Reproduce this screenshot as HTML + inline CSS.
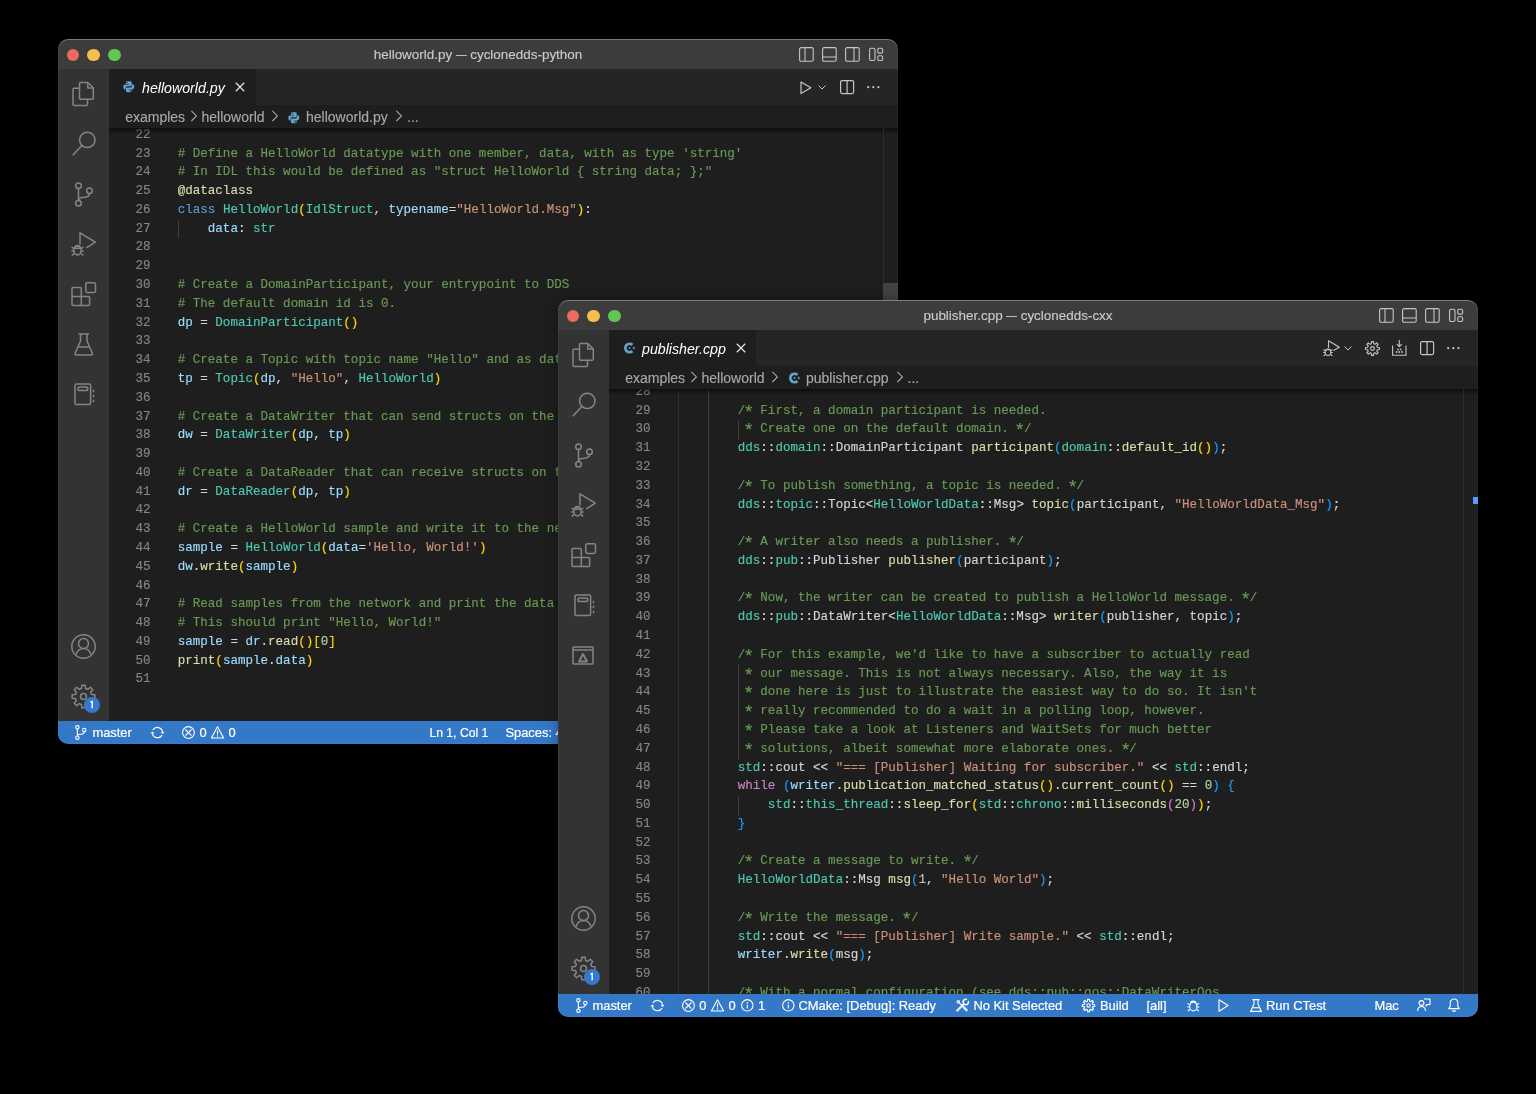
<!DOCTYPE html><html><head><meta charset="utf-8"><style>
*{box-sizing:border-box;margin:0;padding:0}
html,body{width:1536px;height:1094px;background:#000;overflow:hidden;position:relative}
body{font-family:"Liberation Sans",sans-serif}
.win{position:absolute;border-radius:10px;overflow:hidden;background:#1e1e1e;will-change:transform;box-shadow:0 0 14px rgba(0,0,0,.35)}
.frame{position:absolute;inset:0;border-radius:10px;box-shadow:inset 0 1px 0 rgba(255,255,255,.3), inset 0 0 0 1px rgba(255,255,255,.035);pointer-events:none}
.tb{position:absolute;left:0;top:0;right:0;height:30px;background:#3c3c3c}
.tl{position:absolute;top:9.8px;width:12.6px;height:12.6px;border-radius:50%}
.tl.r{background:#ed6a5e}.tl.y{background:#f4bf4f}.tl.g{background:#61c554}
.title{position:absolute;left:0;right:0;top:7.8px;-webkit-text-stroke:0.12px #ccc;text-align:center;color:#cccccc;font-size:13.45px;line-height:16px}
.dash{font-size:10.6px;position:relative;top:-0.6px}
.ic{position:absolute;overflow:visible}
.ab{position:absolute;left:0;top:30px;width:51px;bottom:23.3px;background:#333333}
.tabs{position:absolute;left:51px;right:0;top:30px;height:36px;background:#252526}
.tab{position:absolute;left:51px;top:30px;height:36px;background:#1e1e1e}
.tabname{position:absolute;left:84px;top:40.6px;font-size:14.2px;line-height:16px;font-style:italic;color:#ffffff}
.tabx{position:absolute;top:43px;width:10px;height:10px;line-height:0}
.crumbs{position:absolute;left:51px;right:0;top:66px;height:23px;background:#1e1e1e}
.crumb{position:absolute;top:70px;-webkit-text-stroke:0.12px currentColor;font-size:14px;line-height:16px;color:#a9a9a9;white-space:pre}
.ed{position:absolute;left:51px;right:0;top:89px;bottom:23.3px;overflow:hidden;background:#1e1e1e}
.shadow{position:absolute;left:51px;right:0;top:89px;height:6px;background:linear-gradient(rgba(0,0,0,.55),rgba(0,0,0,0))}
.ln{position:absolute;left:0;text-align:right;-webkit-text-stroke:0.15px currentColor;height:18.78px;line-height:18.78px;font-family:"Liberation Mono",monospace;font-size:12.56px;color:#858585}
.cl{position:absolute;white-space:pre;-webkit-text-stroke:0.15px currentColor;height:18.78px;line-height:18.78px;font-family:"Liberation Mono",monospace;font-size:12.56px;color:#d4d4d4}
.guide{position:absolute;width:1px;background:#404040}
.ast{display:inline-block;width:7.535px;font-style:normal;transform:translateY(2.6px) scale(1.45);-webkit-text-stroke:0.1px currentColor}
.c{color:#6a9955}.k{color:#569cd6}.kc{color:#c586c0}.t{color:#4ec9b0}.f{color:#dcdcaa}.v{color:#9cdcfe}.s{color:#ce9178}.n{color:#b5cea8}
.b1{color:#ffd700}.b2{color:#da70d6}.b3{color:#179fff}
.sbar{position:absolute;right:0;top:89px;bottom:23.3px;width:15.5px;border-left:1px solid #2a2a2a}
.st{position:absolute;left:0;right:0;bottom:0;height:23.3px;background:#3479c8}
.sti{position:absolute;top:0;-webkit-text-stroke:0.2px #fff;height:23.3px;line-height:23.3px;font-size:12.9px;color:#ffffff;white-space:pre}
.badge{position:absolute;width:16px;height:16px;border-radius:50%;background:#3478cf;color:#fff;font-size:10.5px;font-weight:bold;line-height:16px;text-align:center}
</style></head><body><div class="win" style="left:58px;top:39px;width:840px;height:705.2px;z-index:1">
<div class="tb"></div>
<div class="tl r" style="left:8.7px"></div><div class="tl y" style="left:29.4px"></div><div class="tl g" style="left:50.1px"></div>
<div class="title">helloworld.py <span class="dash">—</span> cyclonedds-python</div>
<svg class="ic" style="left:740.8px;top:8.3px" width="15" height="15" viewBox="0 0 15 15" ><g fill="none" stroke="#c5c5c5" stroke-width="1.1"><rect x="0.6" y="0.6" width="13.6" height="13.6" rx="1.5"/><path d="M6 0.6 V14.2"/></g></svg>
<svg class="ic" style="left:764.1px;top:8.3px" width="15" height="15" viewBox="0 0 15 15" ><g fill="none" stroke="#c5c5c5" stroke-width="1.1"><rect x="0.6" y="0.6" width="13.6" height="13.6" rx="1.5"/><path d="M0.6 10 H14.2"/></g></svg>
<svg class="ic" style="left:787.1px;top:8.3px" width="15" height="15" viewBox="0 0 15 15" ><g fill="none" stroke="#c5c5c5" stroke-width="1.1"><rect x="0.6" y="0.6" width="13.6" height="13.6" rx="1.5"/><path d="M9 0.6 V14.2"/></g></svg>
<svg class="ic" style="left:810.8px;top:8.3px" width="15" height="15" viewBox="0 0 15 15" ><g fill="none" stroke="#c5c5c5" stroke-width="1.1"><rect x="0.6" y="1.3" width="5.4" height="12.2" rx="1.5"/><rect x="8.8" y="1.3" width="4.8" height="4.8" rx="1.2"/><rect x="8.8" y="8.7" width="4.8" height="4.8" rx="1.2"/></g></svg>
<div class="ab"></div>
<svg class="ic" style="left:13.7px;top:42.0px" width="24" height="26" viewBox="0 0 24 26" ><g fill="none" stroke="#858585" stroke-width="1.5" stroke-linejoin="round"><path d="M7.5 7.3 H2.2 a1.2 1.2 0 0 0 -1.2 1.2 V23.3 a1.2 1.2 0 0 0 1.2 1.2 H14.3 a1.2 1.2 0 0 0 1.2 -1.2 V18.2"/><path d="M8.7 1.5 H15.8 L21.3 7 V17 a1.2 1.2 0 0 1 -1.2 1.2 H8.7 a1.2 1.2 0 0 1 -1.2 -1.2 V2.7 a1.2 1.2 0 0 1 1.2 -1.2 Z"/><path d="M15.8 1.5 V7 H21.3"/></g></svg>
<svg class="ic" style="left:14.0px;top:92.3px" width="25" height="26" viewBox="0 0 25 26" ><g fill="none" stroke="#858585" stroke-width="1.5"><circle cx="15.3" cy="8.9" r="7.7"/><path d="M9.8 14.4 L0.8 24.2"/></g></svg>
<svg class="ic" style="left:15.5px;top:142.5px" width="20" height="25" viewBox="0 0 20 25" ><g fill="none" stroke="#858585" stroke-width="1.5"><circle cx="4.5" cy="3.8" r="2.8"/><circle cx="4.5" cy="21.2" r="2.8"/><circle cx="15.5" cy="8.8" r="2.8"/><path d="M4.5 6.6 V18.4"/><path d="M15.5 11.6 C15.5 15 12 15.5 8.5 15.5 C6 15.5 4.5 17 4.5 18.4"/></g></svg>
<svg class="ic" style="left:12.899999999999999px;top:192.5px" width="26" height="26" viewBox="0 0 26 26" ><g fill="none" stroke="#858585" stroke-width="1.5" stroke-linejoin="round"><path d="M9 12.5 V0.8 L24.3 10.2 L15.3 15.8"/><ellipse cx="6.5" cy="18.6" rx="3.6" ry="4.3"/><path d="M3.6 15.2 C4.5 13 8.5 13 9.4 15.2"/><path d="M2.9 16.5 L0.6 15.2 M10.1 16.5 L12.4 15.2 M2.9 19 H0.3 M10.1 19 H12.7 M3.1 21.5 L0.8 23.3 M9.9 21.5 L12.2 23.3 M3 16.3 H10"/></g></svg>
<svg class="ic" style="left:12.899999999999999px;top:242.5px" width="26" height="26" viewBox="0 0 26 26" ><g fill="none" stroke="#858585" stroke-width="1.5" stroke-linejoin="round"><path d="M2 5.6 H9.3 a1 1 0 0 1 1 1 V14.6 H17.6 a1 1 0 0 1 1 1 V22.5 a1 1 0 0 1 -1 1 H2 a1 1 0 0 1 -1 -1 V6.6 a1 1 0 0 1 1 -1 Z"/><path d="M1 14.6 H10.3 V23.5"/><rect x="14.8" y="0.7" width="9.7" height="9.7" rx="1.4"/></g></svg>
<svg class="ic" style="left:15.899999999999999px;top:294.2px" width="20" height="23" viewBox="0 0 20 23" ><g fill="none" stroke="#858585" stroke-width="1.5" stroke-linejoin="round"><path d="M4.5 1 H15"/><path d="M6.5 1 V8 L1 20.5 a1 1 0 0 0 0.9 1.4 H17.6 a1 1 0 0 0 0.9 -1.4 L13 8 V1"/><path d="M3.8 14 H15.7"/></g></svg>
<svg class="ic" style="left:15.7px;top:344.3px" width="22" height="23" viewBox="0 0 22 23" ><g fill="none" stroke="#858585" stroke-width="1.5" stroke-linejoin="round"><rect x="1" y="1" width="15.6" height="20.6" rx="1.5"/><rect x="3.9" y="4" width="9.9" height="3.6" rx="1.8"/><path d="M19.5 6.8 V9.3 M19.5 11.8 V14.3 M19.5 16.8 V19.3"/></g></svg>
<svg class="ic" style="left:12.899999999999999px;top:594.7px" width="25" height="25" viewBox="0 0 25 25" ><g fill="none" stroke="#858585" stroke-width="1.5"><circle cx="12.5" cy="12.5" r="11.7"/><circle cx="12.5" cy="9.5" r="5"/><path d="M5 20.5 C6.5 16.5 9 14.6 12.5 14.6 C16 14.6 18.5 16.5 20 20.5"/></g></svg>
<svg class="ic" style="left:12.899999999999999px;top:644.8px" width="25" height="25" viewBox="0 0 25 25" ><g fill="none" stroke="#858585" stroke-width="1.5" stroke-linejoin="round"><path d="M20.56 10.50 L23.87 10.79 L23.87 14.21 L20.56 14.50 L19.61 16.78 L21.75 19.33 L19.33 21.75 L16.78 19.61 L14.50 20.56 L14.21 23.87 L10.79 23.87 L10.50 20.56 L8.22 19.61 L5.67 21.75 L3.25 19.33 L5.39 16.78 L4.44 14.50 L1.13 14.21 L1.13 10.79 L4.44 10.50 L5.39 8.22 L3.25 5.67 L5.67 3.25 L8.22 5.39 L10.50 4.44 L10.79 1.13 L14.21 1.13 L14.50 4.44 L16.78 5.39 L19.33 3.25 L21.75 5.67 L19.61 8.22 Z"/><circle cx="12.5" cy="12.5" r="3"/></g></svg><div class="badge" style="left:25.799999999999997px;top:657.5px"><svg width="16" height="16" viewBox="0 0 16 16" style="position:absolute;left:0;top:0"><path d="M6.5 5.3 L8.2 4.3 V11.2" fill="none" stroke="#fff" stroke-width="1.45" stroke-linejoin="round"/></svg></div>
<div class="tabs"></div>
<div class="tab" style="width:146.5px"></div>
<svg class="ic" style="left:65.2px;top:41.900000000000006px" width="11.6" height="11.6" viewBox="0 0 12 12"><g fill="#62a2cc" fill-rule="evenodd"><path d="M4.5 0.3 H7.6 Q9 0.3 9 1.7 V4.3 Q9 5.4 7.9 5.4 H4.4 Q2.6 5.4 2.6 7.2 V8.7 H1.6 Q0.3 8.7 0.3 6 Q0.3 3.5 1.8 3.5 H6.3 V3.1 H3 V1.8 Q3 0.3 4.5 0.3 Z M4.4 1.2 a0.62 0.62 0 1 0 0.01 0 Z"/><path d="M4.5 0.3 H7.6 Q9 0.3 9 1.7 V4.3 Q9 5.4 7.9 5.4 H4.4 Q2.6 5.4 2.6 7.2 V8.7 H1.6 Q0.3 8.7 0.3 6 Q0.3 3.5 1.8 3.5 H6.3 V3.1 H3 V1.8 Q3 0.3 4.5 0.3 Z M4.4 1.2 a0.62 0.62 0 1 0 0.01 0 Z" transform="rotate(180 6 6)"/></g></svg>
<div class="tabname">helloworld.py</div>
<div class="tabx" style="left:177.25px"><svg width="10" height="10" viewBox="0 0 10 10"><path d="M0.8 0.8 L9.2 9.2 M9.2 0.8 L0.8 9.2" stroke="#e0e0e0" stroke-width="1.3" fill="none"/></svg></div>
<svg class="ic" style="left:741.5px;top:41.8px" width="13" height="14" viewBox="0 0 13 14" ><path d="M1 1 L10.9 6.8 L1 12.6 Z" fill="none" stroke="#c5c5c5" stroke-width="1.2" stroke-linejoin="round"/></svg>
<svg class="ic" style="left:760.3px;top:46px" width="8" height="5" viewBox="0 0 8 5" ><path d="M0.5 0.5 L4 4 L7.5 0.5" fill="none" stroke="#c5c5c5" stroke-width="1"/></svg>
<svg class="ic" style="left:781.6px;top:41px" width="14.5" height="14.5" viewBox="0 0 14.5 14.5" ><g fill="none" stroke="#c5c5c5" stroke-width="1.2"><rect x="0.6" y="0.6" width="13" height="13" rx="1.5"/><path d="M7.1 0.6 V13.6"/></g></svg>
<svg class="ic" style="left:809px;top:46.5px" width="13" height="3" viewBox="0 0 13 3" ><g fill="#c5c5c5"><circle cx="1.2" cy="1.2" r="1.1"/><circle cx="6.3" cy="1.2" r="1.1"/><circle cx="11.4" cy="1.2" r="1.1"/></g></svg>
<div class="crumbs"></div>
<div class="crumb" style="left:67.2px">examples</div>
<svg class="ic" style="left:132.5px;top:72.4px" width="6" height="10" viewBox="0 0 6 10" ><path d="M0.4 -0.2 L5.4 4.9 L0.4 10" fill="none" stroke="#a9a9a9" stroke-width="1.1"/></svg>
<div class="crumb" style="left:143.5px">helloworld</div>
<svg class="ic" style="left:213.5px;top:72.4px" width="6" height="10" viewBox="0 0 6 10" ><path d="M0.4 -0.2 L5.4 4.9 L0.4 10" fill="none" stroke="#a9a9a9" stroke-width="1.1"/></svg>
<svg class="ic" style="left:229.7px;top:72.5px" width="11.6" height="11.6" viewBox="0 0 12 12"><g fill="#62a2cc" fill-rule="evenodd"><path d="M4.5 0.3 H7.6 Q9 0.3 9 1.7 V4.3 Q9 5.4 7.9 5.4 H4.4 Q2.6 5.4 2.6 7.2 V8.7 H1.6 Q0.3 8.7 0.3 6 Q0.3 3.5 1.8 3.5 H6.3 V3.1 H3 V1.8 Q3 0.3 4.5 0.3 Z M4.4 1.2 a0.62 0.62 0 1 0 0.01 0 Z"/><path d="M4.5 0.3 H7.6 Q9 0.3 9 1.7 V4.3 Q9 5.4 7.9 5.4 H4.4 Q2.6 5.4 2.6 7.2 V8.7 H1.6 Q0.3 8.7 0.3 6 Q0.3 3.5 1.8 3.5 H6.3 V3.1 H3 V1.8 Q3 0.3 4.5 0.3 Z M4.4 1.2 a0.62 0.62 0 1 0 0.01 0 Z" transform="rotate(180 6 6)"/></g></svg>
<div class="crumb" style="left:248px">helloworld.py</div>
<svg class="ic" style="left:338px;top:72.4px" width="6" height="10" viewBox="0 0 6 10" ><path d="M0.4 -0.2 L5.4 4.9 L0.4 10" fill="none" stroke="#a9a9a9" stroke-width="1.1"/></svg>
<div class="crumb" style="left:349px">...</div>
<div class="ed">
<div class="guide" style="left:68.7px;top:91.71px;height:18.78px;background:#404040"></div>
<div class="ln" style="top:-2.19px;width:41.5px">22</div>
<div class="ln" style="top:16.59px;width:41.5px">23</div>
<div class="cl" style="top:16.59px;left:68.70px"><span class="c"># Define a HelloWorld datatype with one member, data, with as type 'string'</span></div>
<div class="ln" style="top:35.37px;width:41.5px">24</div>
<div class="cl" style="top:35.37px;left:68.70px"><span class="c"># In IDL this would be defined as "struct HelloWorld { string data; };"</span></div>
<div class="ln" style="top:54.15px;width:41.5px">25</div>
<div class="cl" style="top:54.15px;left:68.70px"><span class="f">@dataclass</span></div>
<div class="ln" style="top:72.93px;width:41.5px">26</div>
<div class="cl" style="top:72.93px;left:68.70px"><span class="k">class</span> <span class="t">HelloWorld</span><span class="b1">(</span><span class="t">IdlStruct</span>, <span class="v">typename</span>=<span class="s">"HelloWorld.Msg"</span><span class="b1">)</span>:</div>
<div class="ln" style="top:91.71px;width:41.5px">27</div>
<div class="cl" style="top:91.71px;left:68.70px">    <span class="v">data</span>: <span class="t">str</span></div>
<div class="ln" style="top:110.49px;width:41.5px">28</div>
<div class="ln" style="top:129.27px;width:41.5px">29</div>
<div class="ln" style="top:148.05px;width:41.5px">30</div>
<div class="cl" style="top:148.05px;left:68.70px"><span class="c"># Create a DomainParticipant, your entrypoint to DDS</span></div>
<div class="ln" style="top:166.83px;width:41.5px">31</div>
<div class="cl" style="top:166.83px;left:68.70px"><span class="c"># The default domain id is 0.</span></div>
<div class="ln" style="top:185.61px;width:41.5px">32</div>
<div class="cl" style="top:185.61px;left:68.70px"><span class="v">dp</span> = <span class="t">DomainParticipant</span><span class="b1">()</span></div>
<div class="ln" style="top:204.39px;width:41.5px">33</div>
<div class="ln" style="top:223.17px;width:41.5px">34</div>
<div class="cl" style="top:223.17px;left:68.70px"><span class="c"># Create a Topic with topic name "Hello" and as datatype "HelloWorld"</span></div>
<div class="ln" style="top:241.95px;width:41.5px">35</div>
<div class="cl" style="top:241.95px;left:68.70px"><span class="v">tp</span> = <span class="t">Topic</span><span class="b1">(</span><span class="v">dp</span>, <span class="s">"Hello"</span>, <span class="t">HelloWorld</span><span class="b1">)</span></div>
<div class="ln" style="top:260.73px;width:41.5px">36</div>
<div class="ln" style="top:279.51px;width:41.5px">37</div>
<div class="cl" style="top:279.51px;left:68.70px"><span class="c"># Create a DataWriter that can send structs on the "Hello" topic</span></div>
<div class="ln" style="top:298.29px;width:41.5px">38</div>
<div class="cl" style="top:298.29px;left:68.70px"><span class="v">dw</span> = <span class="t">DataWriter</span><span class="b1">(</span><span class="v">dp</span>, <span class="v">tp</span><span class="b1">)</span></div>
<div class="ln" style="top:317.07px;width:41.5px">39</div>
<div class="ln" style="top:335.85px;width:41.5px">40</div>
<div class="cl" style="top:335.85px;left:68.70px"><span class="c"># Create a DataReader that can receive structs on the "Hello" topic</span></div>
<div class="ln" style="top:354.63px;width:41.5px">41</div>
<div class="cl" style="top:354.63px;left:68.70px"><span class="v">dr</span> = <span class="t">DataReader</span><span class="b1">(</span><span class="v">dp</span>, <span class="v">tp</span><span class="b1">)</span></div>
<div class="ln" style="top:373.41px;width:41.5px">42</div>
<div class="ln" style="top:392.19px;width:41.5px">43</div>
<div class="cl" style="top:392.19px;left:68.70px"><span class="c"># Create a HelloWorld sample and write it to the network</span></div>
<div class="ln" style="top:410.97px;width:41.5px">44</div>
<div class="cl" style="top:410.97px;left:68.70px"><span class="v">sample</span> = <span class="t">HelloWorld</span><span class="b1">(</span><span class="v">data</span>=<span class="s">'Hello, World!'</span><span class="b1">)</span></div>
<div class="ln" style="top:429.75px;width:41.5px">45</div>
<div class="cl" style="top:429.75px;left:68.70px"><span class="v">dw</span>.<span class="f">write</span><span class="b1">(</span><span class="v">sample</span><span class="b1">)</span></div>
<div class="ln" style="top:448.53px;width:41.5px">46</div>
<div class="ln" style="top:467.31px;width:41.5px">47</div>
<div class="cl" style="top:467.31px;left:68.70px"><span class="c"># Read samples from the network and print the data in the first one</span></div>
<div class="ln" style="top:486.09px;width:41.5px">48</div>
<div class="cl" style="top:486.09px;left:68.70px"><span class="c"># This should print "Hello, World!"</span></div>
<div class="ln" style="top:504.87px;width:41.5px">49</div>
<div class="cl" style="top:504.87px;left:68.70px"><span class="v">sample</span> = <span class="v">dr</span>.<span class="f">read</span><span class="b1">()</span><span class="b1">[</span><span class="n">0</span><span class="b1">]</span></div>
<div class="ln" style="top:523.65px;width:41.5px">50</div>
<div class="cl" style="top:523.65px;left:68.70px"><span class="f">print</span><span class="b1">(</span><span class="v">sample</span>.<span class="v">data</span><span class="b1">)</span></div>
<div class="ln" style="top:542.43px;width:41.5px">51</div>
</div>
<div class="shadow"></div>
<div class="sbar"></div>
<div style="position:absolute;right:0;top:244px;width:15px;height:200px;background:#434343"></div>
<div class="st"></div>
<svg class="ic" style="left:17.1px;top:685.9000000000001px" width="12" height="15" viewBox="0 0 12 15" ><g fill="none" stroke="#ffffff" stroke-width="1.1"><circle cx="2.4" cy="2.3" r="1.7"/><circle cx="2.4" cy="12.7" r="1.7"/><circle cx="9.3" cy="5" r="1.7"/><path d="M2.4 4 V11 M9.3 6.7 C9.3 9 7.5 9.3 5 9.3 C3.5 9.3 2.4 10 2.4 11"/></g></svg>
<div class="sti" style="top:681.7px;left:34.4px;">master</div>
<svg class="ic" style="left:91.5px;top:685.9000000000001px" width="15" height="15" viewBox="0 0 15 15" ><g fill="none" stroke="#ffffff" stroke-width="1.15"><path d="M2.91 4.85 A5.3 5.3 0 0 1 12.6 7.2"/><path d="M12.09 10.15 A5.3 5.3 0 0 1 2.36 8.6"/></g><g fill="#ffffff"><path d="M10.5 6.9 L14.6 6.9 L12.6 9.0 Z"/><path d="M0.4 8.6 L4.5 8.6 L2.4 6.5 Z"/></g></svg>
<svg class="ic" style="left:123.6px;top:686.9000000000001px" width="13" height="13" viewBox="0 0 13 13" ><g fill="none" stroke="#ffffff" stroke-width="1.1"><circle cx="6.45" cy="6.55" r="5.9"/><path d="M3.4 3.5 L9.5 9.6 M9.5 3.5 L3.4 9.6"/></g></svg>
<div class="sti" style="top:681.7px;left:141.5px;">0</div>
<svg class="ic" style="left:153px;top:686.9000000000001px" width="13" height="13" viewBox="0 0 13 13" ><g fill="none" stroke="#ffffff" stroke-width="1.1" stroke-linejoin="round"><path d="M6.5 0.8 L12.6 12 H0.4 Z"/><path d="M6.5 4.5 V8.4"/></g><circle cx="6.5" cy="10" r="0.7" fill="#ffffff"/></svg>
<div class="sti" style="top:681.7px;left:170.6px;">0</div>
<div class="sti" style="top:681.7px;left:371.4px;font-size:12.2px;margin-top:1.4px">Ln 1, Col 1</div>
<div class="sti" style="top:681.7px;left:447.4px;">Spaces: 4</div>
<div class="sti" style="top:681.7px;left:530px;">UTF-8</div>
<div class="sti" style="top:681.7px;left:590px;">LF</div>
<div class="sti" style="top:681.7px;left:620px;">Python 3.10</div>
<div class="frame"></div>
</div>
<div class="win" style="left:558px;top:300px;width:920px;height:717px;z-index:2">
<div class="tb"></div>
<div class="tl r" style="left:8.7px"></div><div class="tl y" style="left:29.4px"></div><div class="tl g" style="left:50.1px"></div>
<div class="title">publisher.cpp <span class="dash">—</span> cyclonedds-cxx</div>
<svg class="ic" style="left:820.8px;top:8.3px" width="15" height="15" viewBox="0 0 15 15" ><g fill="none" stroke="#c5c5c5" stroke-width="1.1"><rect x="0.6" y="0.6" width="13.6" height="13.6" rx="1.5"/><path d="M6 0.6 V14.2"/></g></svg>
<svg class="ic" style="left:844.1px;top:8.3px" width="15" height="15" viewBox="0 0 15 15" ><g fill="none" stroke="#c5c5c5" stroke-width="1.1"><rect x="0.6" y="0.6" width="13.6" height="13.6" rx="1.5"/><path d="M0.6 10 H14.2"/></g></svg>
<svg class="ic" style="left:867.1px;top:8.3px" width="15" height="15" viewBox="0 0 15 15" ><g fill="none" stroke="#c5c5c5" stroke-width="1.1"><rect x="0.6" y="0.6" width="13.6" height="13.6" rx="1.5"/><path d="M9 0.6 V14.2"/></g></svg>
<svg class="ic" style="left:890.8px;top:8.3px" width="15" height="15" viewBox="0 0 15 15" ><g fill="none" stroke="#c5c5c5" stroke-width="1.1"><rect x="0.6" y="1.3" width="5.4" height="12.2" rx="1.5"/><rect x="8.8" y="1.3" width="4.8" height="4.8" rx="1.2"/><rect x="8.8" y="8.7" width="4.8" height="4.8" rx="1.2"/></g></svg>
<div class="ab"></div>
<svg class="ic" style="left:13.7px;top:42.0px" width="24" height="26" viewBox="0 0 24 26" ><g fill="none" stroke="#858585" stroke-width="1.5" stroke-linejoin="round"><path d="M7.5 7.3 H2.2 a1.2 1.2 0 0 0 -1.2 1.2 V23.3 a1.2 1.2 0 0 0 1.2 1.2 H14.3 a1.2 1.2 0 0 0 1.2 -1.2 V18.2"/><path d="M8.7 1.5 H15.8 L21.3 7 V17 a1.2 1.2 0 0 1 -1.2 1.2 H8.7 a1.2 1.2 0 0 1 -1.2 -1.2 V2.7 a1.2 1.2 0 0 1 1.2 -1.2 Z"/><path d="M15.8 1.5 V7 H21.3"/></g></svg>
<svg class="ic" style="left:14.0px;top:92.3px" width="25" height="26" viewBox="0 0 25 26" ><g fill="none" stroke="#858585" stroke-width="1.5"><circle cx="15.3" cy="8.9" r="7.7"/><path d="M9.8 14.4 L0.8 24.2"/></g></svg>
<svg class="ic" style="left:15.5px;top:142.5px" width="20" height="25" viewBox="0 0 20 25" ><g fill="none" stroke="#858585" stroke-width="1.5"><circle cx="4.5" cy="3.8" r="2.8"/><circle cx="4.5" cy="21.2" r="2.8"/><circle cx="15.5" cy="8.8" r="2.8"/><path d="M4.5 6.6 V18.4"/><path d="M15.5 11.6 C15.5 15 12 15.5 8.5 15.5 C6 15.5 4.5 17 4.5 18.4"/></g></svg>
<svg class="ic" style="left:12.899999999999999px;top:192.5px" width="26" height="26" viewBox="0 0 26 26" ><g fill="none" stroke="#858585" stroke-width="1.5" stroke-linejoin="round"><path d="M9 12.5 V0.8 L24.3 10.2 L15.3 15.8"/><ellipse cx="6.5" cy="18.6" rx="3.6" ry="4.3"/><path d="M3.6 15.2 C4.5 13 8.5 13 9.4 15.2"/><path d="M2.9 16.5 L0.6 15.2 M10.1 16.5 L12.4 15.2 M2.9 19 H0.3 M10.1 19 H12.7 M3.1 21.5 L0.8 23.3 M9.9 21.5 L12.2 23.3 M3 16.3 H10"/></g></svg>
<svg class="ic" style="left:12.899999999999999px;top:242.5px" width="26" height="26" viewBox="0 0 26 26" ><g fill="none" stroke="#858585" stroke-width="1.5" stroke-linejoin="round"><path d="M2 5.6 H9.3 a1 1 0 0 1 1 1 V14.6 H17.6 a1 1 0 0 1 1 1 V22.5 a1 1 0 0 1 -1 1 H2 a1 1 0 0 1 -1 -1 V6.6 a1 1 0 0 1 1 -1 Z"/><path d="M1 14.6 H10.3 V23.5"/><rect x="14.8" y="0.7" width="9.7" height="9.7" rx="1.4"/></g></svg>
<svg class="ic" style="left:15.7px;top:294.09999999999997px" width="22" height="23" viewBox="0 0 22 23" ><g fill="none" stroke="#858585" stroke-width="1.5" stroke-linejoin="round"><rect x="1" y="1" width="15.6" height="20.6" rx="1.5"/><rect x="3.9" y="4" width="9.9" height="3.6" rx="1.8"/><path d="M19.5 6.8 V9.3 M19.5 11.8 V14.3 M19.5 16.8 V19.3"/></g></svg>
<svg class="ic" style="left:14.2px;top:346.0px" width="22" height="19" viewBox="0 0 22 19" ><g fill="none" stroke="#858585" stroke-width="1.5" stroke-linejoin="round"><rect x="1" y="1" width="20" height="17" rx="0.8"/><path d="M1 4 H21"/><path d="M11 8 L15 15.5 H7 Z" stroke-width="1.8"/></g></svg>
<svg class="ic" style="left:12.899999999999999px;top:605.7px" width="25" height="25" viewBox="0 0 25 25" ><g fill="none" stroke="#858585" stroke-width="1.5"><circle cx="12.5" cy="12.5" r="11.7"/><circle cx="12.5" cy="9.5" r="5"/><path d="M5 20.5 C6.5 16.5 9 14.6 12.5 14.6 C16 14.6 18.5 16.5 20 20.5"/></g></svg>
<svg class="ic" style="left:12.899999999999999px;top:655.8px" width="25" height="25" viewBox="0 0 25 25" ><g fill="none" stroke="#858585" stroke-width="1.5" stroke-linejoin="round"><path d="M20.56 10.50 L23.87 10.79 L23.87 14.21 L20.56 14.50 L19.61 16.78 L21.75 19.33 L19.33 21.75 L16.78 19.61 L14.50 20.56 L14.21 23.87 L10.79 23.87 L10.50 20.56 L8.22 19.61 L5.67 21.75 L3.25 19.33 L5.39 16.78 L4.44 14.50 L1.13 14.21 L1.13 10.79 L4.44 10.50 L5.39 8.22 L3.25 5.67 L5.67 3.25 L8.22 5.39 L10.50 4.44 L10.79 1.13 L14.21 1.13 L14.50 4.44 L16.78 5.39 L19.33 3.25 L21.75 5.67 L19.61 8.22 Z"/><circle cx="12.5" cy="12.5" r="3"/></g></svg><div class="badge" style="left:25.799999999999997px;top:668.5px"><svg width="16" height="16" viewBox="0 0 16 16" style="position:absolute;left:0;top:0"><path d="M6.5 5.3 L8.2 4.3 V11.2" fill="none" stroke="#fff" stroke-width="1.45" stroke-linejoin="round"/></svg></div>
<div class="tabs"></div>
<div class="tab" style="width:147.3px"></div>
<svg class="ic" style="left:66.0px;top:41.7px" width="14.0" height="12.0" viewBox="0 0 14 12"><g fill="#62a2cc"><path d="M9.35 1.84 A5.6 5.6 0 1 0 9.35 10.16 L7.47 8.08 A2.8 2.8 0 1 1 7.47 3.92 Z"/><circle cx="5.6" cy="6" r="0.95"/><path d="M9.9 4 L10.4 5.5 L11.9 6 L10.4 6.5 L9.9 8 L9.4 6.5 L7.9 6 L9.4 5.5 Z"/></g></svg>
<div class="tabname">publisher.cpp</div>
<div class="tabx" style="left:178.05px"><svg width="10" height="10" viewBox="0 0 10 10"><path d="M0.8 0.8 L9.2 9.2 M9.2 0.8 L0.8 9.2" stroke="#e0e0e0" stroke-width="1.3" fill="none"/></svg></div>
<svg class="ic" style="left:765px;top:40px" width="17" height="17" viewBox="0 0 17 17" ><g fill="none" stroke="#c5c5c5" stroke-width="1.1" stroke-linejoin="round"><path d="M5.5 8 V0.8 L16.3 7.2 L10.5 10.4"/><ellipse cx="5" cy="12.3" rx="2.8" ry="3.2"/><path d="M2.2 10.6 L0.4 9.8 M7.8 10.6 L9.6 9.8 M2.2 12.5 H0.3 M7.8 12.5 H9.7 M2.4 14.5 L0.6 15.8 M7.6 14.5 L9.4 15.8 M2.6 9.8 H7.4"/></g></svg>
<svg class="ic" style="left:786px;top:46px" width="8" height="5" viewBox="0 0 8 5" ><path d="M0.5 0.5 L4 4 L7.5 0.5" fill="none" stroke="#c5c5c5" stroke-width="1"/></svg>
<svg class="ic" style="left:807px;top:40.5px" width="15" height="15" viewBox="0 0 15 15" ><g fill="none" stroke="#c5c5c5" stroke-width="1.1" stroke-linejoin="round"><path d="M12.35 6.29 L14.42 6.46 L14.42 8.54 L12.35 8.71 L11.78 10.08 L13.13 11.66 L11.66 13.13 L10.08 11.78 L8.71 12.35 L8.54 14.42 L6.46 14.42 L6.29 12.35 L4.92 11.78 L3.34 13.13 L1.87 11.66 L3.22 10.08 L2.65 8.71 L0.58 8.54 L0.58 6.46 L2.65 6.29 L3.22 4.92 L1.87 3.34 L3.34 1.87 L4.92 3.22 L6.29 2.65 L6.46 0.58 L8.54 0.58 L8.71 2.65 L10.08 3.22 L11.66 1.87 L13.13 3.34 L11.78 4.92 Z"/><circle cx="7.5" cy="7.5" r="1.9"/></g></svg>
<svg class="ic" style="left:834px;top:40px" width="15" height="16" viewBox="0 0 15 16" ><g fill="none" stroke="#c5c5c5" stroke-width="1.1" stroke-linejoin="round"><path d="M0.6 5.5 V15.2 H14 V5.5"/><path d="M7.3 0 V6.5 M4.8 4.2 L7.3 6.7 L9.8 4.2"/></g><g fill="#c5c5c5"><circle cx="4.6" cy="12" r="0.9"/><circle cx="7.3" cy="12" r="0.9"/><circle cx="10" cy="12" r="0.9"/><circle cx="6" cy="9.4" r="0.9"/><circle cx="8.6" cy="9.4" r="0.9"/></g></svg>
<svg class="ic" style="left:861.6px;top:41px" width="14.5" height="14.5" viewBox="0 0 14.5 14.5" ><g fill="none" stroke="#c5c5c5" stroke-width="1.2"><rect x="0.6" y="0.6" width="13" height="13" rx="1.5"/><path d="M7.1 0.6 V13.6"/></g></svg>
<svg class="ic" style="left:889px;top:46.5px" width="13" height="3" viewBox="0 0 13 3" ><g fill="#c5c5c5"><circle cx="1.2" cy="1.2" r="1.1"/><circle cx="6.3" cy="1.2" r="1.1"/><circle cx="11.4" cy="1.2" r="1.1"/></g></svg>
<div class="crumbs"></div>
<div class="crumb" style="left:67.2px">examples</div>
<svg class="ic" style="left:132.5px;top:72.4px" width="6" height="10" viewBox="0 0 6 10" ><path d="M0.4 -0.2 L5.4 4.9 L0.4 10" fill="none" stroke="#a9a9a9" stroke-width="1.1"/></svg>
<div class="crumb" style="left:143.5px">helloworld</div>
<svg class="ic" style="left:213.5px;top:72.4px" width="6" height="10" viewBox="0 0 6 10" ><path d="M0.4 -0.2 L5.4 4.9 L0.4 10" fill="none" stroke="#a9a9a9" stroke-width="1.1"/></svg>
<svg class="ic" style="left:230.5px;top:72.3px" width="14.0" height="12.0" viewBox="0 0 14 12"><g fill="#62a2cc"><path d="M9.35 1.84 A5.6 5.6 0 1 0 9.35 10.16 L7.47 8.08 A2.8 2.8 0 1 1 7.47 3.92 Z"/><circle cx="5.6" cy="6" r="0.95"/><path d="M9.9 4 L10.4 5.5 L11.9 6 L10.4 6.5 L9.9 8 L9.4 6.5 L7.9 6 L9.4 5.5 Z"/></g></svg>
<div class="crumb" style="left:248px">publisher.cpp</div>
<svg class="ic" style="left:338.5px;top:72.4px" width="6" height="10" viewBox="0 0 6 10" ><path d="M0.4 -0.2 L5.4 4.9 L0.4 10" fill="none" stroke="#a9a9a9" stroke-width="1.1"/></svg>
<div class="crumb" style="left:349.5px">...</div>
<div class="ed">
<div class="guide" style="left:68.7px;top:-6.09px;height:19.08px;background:#303030"></div><div class="guide" style="left:99px;top:-6.09px;height:19.08px;background:#404040"></div><div class="guide" style="left:68.7px;top:12.69px;height:19.08px;background:#303030"></div><div class="guide" style="left:99px;top:12.69px;height:19.08px;background:#404040"></div><div class="guide" style="left:68.7px;top:31.47px;height:19.08px;background:#303030"></div><div class="guide" style="left:99px;top:31.47px;height:19.08px;background:#404040"></div><div class="guide" style="left:68.7px;top:50.25px;height:19.08px;background:#303030"></div><div class="guide" style="left:99px;top:50.25px;height:19.08px;background:#404040"></div><div class="guide" style="left:68.7px;top:69.03px;height:19.08px;background:#303030"></div><div class="guide" style="left:99px;top:69.03px;height:19.08px;background:#404040"></div><div class="guide" style="left:68.7px;top:87.81px;height:19.08px;background:#303030"></div><div class="guide" style="left:99px;top:87.81px;height:19.08px;background:#404040"></div><div class="guide" style="left:68.7px;top:106.59px;height:19.08px;background:#303030"></div><div class="guide" style="left:99px;top:106.59px;height:19.08px;background:#404040"></div><div class="guide" style="left:68.7px;top:125.37px;height:19.08px;background:#303030"></div><div class="guide" style="left:99px;top:125.37px;height:19.08px;background:#404040"></div><div class="guide" style="left:68.7px;top:144.15px;height:19.08px;background:#303030"></div><div class="guide" style="left:99px;top:144.15px;height:19.08px;background:#404040"></div><div class="guide" style="left:68.7px;top:162.93px;height:19.08px;background:#303030"></div><div class="guide" style="left:99px;top:162.93px;height:19.08px;background:#404040"></div><div class="guide" style="left:68.7px;top:181.71px;height:19.08px;background:#303030"></div><div class="guide" style="left:99px;top:181.71px;height:19.08px;background:#404040"></div><div class="guide" style="left:68.7px;top:200.49px;height:19.08px;background:#303030"></div><div class="guide" style="left:99px;top:200.49px;height:19.08px;background:#404040"></div><div class="guide" style="left:68.7px;top:219.27px;height:19.08px;background:#303030"></div><div class="guide" style="left:99px;top:219.27px;height:19.08px;background:#404040"></div><div class="guide" style="left:68.7px;top:238.05px;height:19.08px;background:#303030"></div><div class="guide" style="left:99px;top:238.05px;height:19.08px;background:#404040"></div><div class="guide" style="left:68.7px;top:256.83px;height:19.08px;background:#303030"></div><div class="guide" style="left:99px;top:256.83px;height:19.08px;background:#404040"></div><div class="guide" style="left:68.7px;top:275.61px;height:19.08px;background:#303030"></div><div class="guide" style="left:99px;top:275.61px;height:19.08px;background:#404040"></div><div class="guide" style="left:68.7px;top:294.39px;height:19.08px;background:#303030"></div><div class="guide" style="left:99px;top:294.39px;height:19.08px;background:#404040"></div><div class="guide" style="left:68.7px;top:313.17px;height:19.08px;background:#303030"></div><div class="guide" style="left:99px;top:313.17px;height:19.08px;background:#404040"></div><div class="guide" style="left:68.7px;top:331.95px;height:19.08px;background:#303030"></div><div class="guide" style="left:99px;top:331.95px;height:19.08px;background:#404040"></div><div class="guide" style="left:68.7px;top:350.73px;height:19.08px;background:#303030"></div><div class="guide" style="left:99px;top:350.73px;height:19.08px;background:#404040"></div><div class="guide" style="left:68.7px;top:369.51px;height:19.08px;background:#303030"></div><div class="guide" style="left:99px;top:369.51px;height:19.08px;background:#404040"></div><div class="guide" style="left:68.7px;top:388.29px;height:19.08px;background:#303030"></div><div class="guide" style="left:99px;top:388.29px;height:19.08px;background:#404040"></div><div class="guide" style="left:68.7px;top:407.07px;height:19.08px;background:#303030"></div><div class="guide" style="left:99px;top:407.07px;height:19.08px;background:#404040"></div><div class="guide" style="left:68.7px;top:425.85px;height:19.08px;background:#303030"></div><div class="guide" style="left:99px;top:425.85px;height:19.08px;background:#404040"></div><div class="guide" style="left:68.7px;top:444.63px;height:19.08px;background:#303030"></div><div class="guide" style="left:99px;top:444.63px;height:19.08px;background:#404040"></div><div class="guide" style="left:68.7px;top:463.41px;height:19.08px;background:#303030"></div><div class="guide" style="left:99px;top:463.41px;height:19.08px;background:#404040"></div><div class="guide" style="left:68.7px;top:482.19px;height:19.08px;background:#303030"></div><div class="guide" style="left:99px;top:482.19px;height:19.08px;background:#404040"></div><div class="guide" style="left:68.7px;top:500.97px;height:19.08px;background:#303030"></div><div class="guide" style="left:99px;top:500.97px;height:19.08px;background:#404040"></div><div class="guide" style="left:68.7px;top:519.75px;height:19.08px;background:#303030"></div><div class="guide" style="left:99px;top:519.75px;height:19.08px;background:#404040"></div><div class="guide" style="left:68.7px;top:538.53px;height:19.08px;background:#303030"></div><div class="guide" style="left:99px;top:538.53px;height:19.08px;background:#404040"></div><div class="guide" style="left:68.7px;top:557.31px;height:19.08px;background:#303030"></div><div class="guide" style="left:99px;top:557.31px;height:19.08px;background:#404040"></div><div class="guide" style="left:68.7px;top:576.09px;height:19.08px;background:#303030"></div><div class="guide" style="left:99px;top:576.09px;height:19.08px;background:#404040"></div><div class="guide" style="left:68.7px;top:594.87px;height:19.08px;background:#303030"></div><div class="guide" style="left:99px;top:594.87px;height:19.08px;background:#404040"></div><div class="guide" style="left:129.4px;top:31.47px;height:18.78px;background:#404040"></div><div class="guide" style="left:129.4px;top:275.61px;height:93.90px;background:#404040"></div><div class="guide" style="left:129.4px;top:407.07px;height:18.78px;background:#404040"></div>
<div class="ln" style="top:-6.09px;width:41.5px">28</div>
<div class="ln" style="top:12.69px;width:41.5px">29</div>
<div class="cl" style="top:12.69px;left:68.50px">        <span class="c">/<i class="ast">*</i> First, a domain participant is needed.</span></div>
<div class="ln" style="top:31.47px;width:41.5px">30</div>
<div class="cl" style="top:31.47px;left:68.50px">        <span class="c"> <i class="ast">*</i> Create one on the default domain. <i class="ast">*</i>/</span></div>
<div class="ln" style="top:50.25px;width:41.5px">31</div>
<div class="cl" style="top:50.25px;left:68.50px">        <span class="t">dds</span>::<span class="t">domain</span>::DomainParticipant <span class="f">participant</span><span class="b3">(</span><span class="t">domain</span>::<span class="f">default_id</span><span class="b1">()</span><span class="b3">)</span>;</div>
<div class="ln" style="top:69.03px;width:41.5px">32</div>
<div class="ln" style="top:87.81px;width:41.5px">33</div>
<div class="cl" style="top:87.81px;left:68.50px">        <span class="c">/<i class="ast">*</i> To publish something, a topic is needed. <i class="ast">*</i>/</span></div>
<div class="ln" style="top:106.59px;width:41.5px">34</div>
<div class="cl" style="top:106.59px;left:68.50px">        <span class="t">dds</span>::<span class="t">topic</span>::Topic&lt;<span class="t">HelloWorldData</span>::Msg&gt; <span class="f">topic</span><span class="b3">(</span>participant, <span class="s">"HelloWorldData_Msg"</span><span class="b3">)</span>;</div>
<div class="ln" style="top:125.37px;width:41.5px">35</div>
<div class="ln" style="top:144.15px;width:41.5px">36</div>
<div class="cl" style="top:144.15px;left:68.50px">        <span class="c">/<i class="ast">*</i> A writer also needs a publisher. <i class="ast">*</i>/</span></div>
<div class="ln" style="top:162.93px;width:41.5px">37</div>
<div class="cl" style="top:162.93px;left:68.50px">        <span class="t">dds</span>::<span class="t">pub</span>::Publisher <span class="f">publisher</span><span class="b3">(</span>participant<span class="b3">)</span>;</div>
<div class="ln" style="top:181.71px;width:41.5px">38</div>
<div class="ln" style="top:200.49px;width:41.5px">39</div>
<div class="cl" style="top:200.49px;left:68.50px">        <span class="c">/<i class="ast">*</i> Now, the writer can be created to publish a HelloWorld message. <i class="ast">*</i>/</span></div>
<div class="ln" style="top:219.27px;width:41.5px">40</div>
<div class="cl" style="top:219.27px;left:68.50px">        <span class="t">dds</span>::<span class="t">pub</span>::DataWriter&lt;<span class="t">HelloWorldData</span>::Msg&gt; <span class="f">writer</span><span class="b3">(</span>publisher, topic<span class="b3">)</span>;</div>
<div class="ln" style="top:238.05px;width:41.5px">41</div>
<div class="ln" style="top:256.83px;width:41.5px">42</div>
<div class="cl" style="top:256.83px;left:68.50px">        <span class="c">/<i class="ast">*</i> For this example, we'd like to have a subscriber to actually read</span></div>
<div class="ln" style="top:275.61px;width:41.5px">43</div>
<div class="cl" style="top:275.61px;left:68.50px">        <span class="c"> <i class="ast">*</i> our message. This is not always necessary. Also, the way it is</span></div>
<div class="ln" style="top:294.39px;width:41.5px">44</div>
<div class="cl" style="top:294.39px;left:68.50px">        <span class="c"> <i class="ast">*</i> done here is just to illustrate the easiest way to do so. It isn't</span></div>
<div class="ln" style="top:313.17px;width:41.5px">45</div>
<div class="cl" style="top:313.17px;left:68.50px">        <span class="c"> <i class="ast">*</i> really recommended to do a wait in a polling loop, however.</span></div>
<div class="ln" style="top:331.95px;width:41.5px">46</div>
<div class="cl" style="top:331.95px;left:68.50px">        <span class="c"> <i class="ast">*</i> Please take a look at Listeners and WaitSets for much better</span></div>
<div class="ln" style="top:350.73px;width:41.5px">47</div>
<div class="cl" style="top:350.73px;left:68.50px">        <span class="c"> <i class="ast">*</i> solutions, albeit somewhat more elaborate ones. <i class="ast">*</i>/</span></div>
<div class="ln" style="top:369.51px;width:41.5px">48</div>
<div class="cl" style="top:369.51px;left:68.50px">        <span class="t">std</span>::cout &lt;&lt; <span class="s">"=== [Publisher] Waiting for subscriber."</span> &lt;&lt; <span class="t">std</span>::endl;</div>
<div class="ln" style="top:388.29px;width:41.5px">49</div>
<div class="cl" style="top:388.29px;left:68.50px">        <span class="kc">while</span> <span class="b3">(</span><span class="v">writer</span>.<span class="f">publication_matched_status</span><span class="b1">()</span>.<span class="f">current_count</span><span class="b1">()</span> == <span class="n">0</span><span class="b3">)</span> <span class="b3">{</span></div>
<div class="ln" style="top:407.07px;width:41.5px">50</div>
<div class="cl" style="top:407.07px;left:68.50px">            <span class="t">std</span>::<span class="t">this_thread</span>::<span class="f">sleep_for</span><span class="b1">(</span><span class="t">std</span>::<span class="t">chrono</span>::<span class="f">milliseconds</span><span class="b2">(</span><span class="n">20</span><span class="b2">)</span><span class="b1">)</span>;</div>
<div class="ln" style="top:425.85px;width:41.5px">51</div>
<div class="cl" style="top:425.85px;left:68.50px">        <span class="b3">}</span></div>
<div class="ln" style="top:444.63px;width:41.5px">52</div>
<div class="ln" style="top:463.41px;width:41.5px">53</div>
<div class="cl" style="top:463.41px;left:68.50px">        <span class="c">/<i class="ast">*</i> Create a message to write. <i class="ast">*</i>/</span></div>
<div class="ln" style="top:482.19px;width:41.5px">54</div>
<div class="cl" style="top:482.19px;left:68.50px">        <span class="t">HelloWorldData</span>::Msg <span class="f">msg</span><span class="b3">(</span><span class="n">1</span>, <span class="s">"Hello World"</span><span class="b3">)</span>;</div>
<div class="ln" style="top:500.97px;width:41.5px">55</div>
<div class="ln" style="top:519.75px;width:41.5px">56</div>
<div class="cl" style="top:519.75px;left:68.50px">        <span class="c">/<i class="ast">*</i> Write the message. <i class="ast">*</i>/</span></div>
<div class="ln" style="top:538.53px;width:41.5px">57</div>
<div class="cl" style="top:538.53px;left:68.50px">        <span class="t">std</span>::cout &lt;&lt; <span class="s">"=== [Publisher] Write sample."</span> &lt;&lt; <span class="t">std</span>::endl;</div>
<div class="ln" style="top:557.31px;width:41.5px">58</div>
<div class="cl" style="top:557.31px;left:68.50px">        <span class="v">writer</span>.<span class="f">write</span><span class="b3">(</span>msg<span class="b3">)</span>;</div>
<div class="ln" style="top:576.09px;width:41.5px">59</div>
<div class="ln" style="top:594.87px;width:41.5px">60</div>
<div class="cl" style="top:594.87px;left:68.50px">        <span class="c">/<i class="ast">*</i> With a normal configuration (see dds::pub::qos::DataWriterQos</span></div>
</div>
<div class="shadow"></div>
<div class="sbar"></div>
<div style="position:absolute;left:915px;top:197.2px;width:5px;height:6.8px;background:#5a9cf8"></div>
<div class="st"></div>
<svg class="ic" style="left:17.5px;top:697.7px" width="12" height="15" viewBox="0 0 12 15" ><g fill="none" stroke="#ffffff" stroke-width="1.1"><circle cx="2.4" cy="2.3" r="1.7"/><circle cx="2.4" cy="12.7" r="1.7"/><circle cx="9.3" cy="5" r="1.7"/><path d="M2.4 4 V11 M9.3 6.7 C9.3 9 7.5 9.3 5 9.3 C3.5 9.3 2.4 10 2.4 11"/></g></svg>
<div class="sti" style="top:694.0px;left:34.5px;">master</div>
<svg class="ic" style="left:91.5px;top:697.7px" width="15" height="15" viewBox="0 0 15 15" ><g fill="none" stroke="#ffffff" stroke-width="1.15"><path d="M2.91 4.85 A5.3 5.3 0 0 1 12.6 7.2"/><path d="M12.09 10.15 A5.3 5.3 0 0 1 2.36 8.6"/></g><g fill="#ffffff"><path d="M10.5 6.9 L14.6 6.9 L12.6 9.0 Z"/><path d="M0.4 8.6 L4.5 8.6 L2.4 6.5 Z"/></g></svg>
<svg class="ic" style="left:123.6px;top:698.7px" width="13" height="13" viewBox="0 0 13 13" ><g fill="none" stroke="#ffffff" stroke-width="1.1"><circle cx="6.45" cy="6.55" r="5.9"/><path d="M3.4 3.5 L9.5 9.6 M9.5 3.5 L3.4 9.6"/></g></svg>
<div class="sti" style="top:694.0px;left:141.3px;">0</div>
<svg class="ic" style="left:153px;top:698.7px" width="13" height="13" viewBox="0 0 13 13" ><g fill="none" stroke="#ffffff" stroke-width="1.1" stroke-linejoin="round"><path d="M6.5 0.8 L12.6 12 H0.4 Z"/><path d="M6.5 4.5 V8.4"/></g><circle cx="6.5" cy="10" r="0.7" fill="#ffffff"/></svg>
<div class="sti" style="top:694.0px;left:170.6px;">0</div>
<svg class="ic" style="left:183px;top:698.7px" width="13" height="13" viewBox="0 0 13 13" ><g fill="none" stroke="#ffffff" stroke-width="1.1"><circle cx="6.3" cy="6.3" r="5.7"/><path d="M6.3 5.5 V9.6"/></g><circle cx="6.3" cy="3.7" r="0.75" fill="#ffffff"/></svg>
<div class="sti" style="top:694.0px;left:200px;">1</div>
<svg class="ic" style="left:223.5px;top:698.7px" width="13" height="13" viewBox="0 0 13 13" ><g fill="none" stroke="#ffffff" stroke-width="1.1"><circle cx="6.3" cy="6.3" r="5.7"/><path d="M6.3 5.5 V9.6"/></g><circle cx="6.3" cy="3.7" r="0.75" fill="#ffffff"/></svg>
<div class="sti" style="top:694.0px;left:240.5px;">CMake: [Debug]: Ready</div>
<svg class="ic" style="left:397.8px;top:698.2px" width="14" height="14" viewBox="0 0 14 14" ><g fill="none" stroke="#ffffff" stroke-linecap="round"><path d="M1.3 12.5 L7.6 6.2" stroke-width="2.3" opacity="0.85"/><path d="M12.46 3.53 A2.7 2.7 0 1 1 10.27 1.34" stroke-width="1.5"/><path d="M2.8 4.4 L7.2 8.8" stroke-width="1.1"/><circle cx="2.3" cy="3.7" r="1.2" stroke-width="1.1"/><path d="M8.0 9.6 L10.6 12.2" stroke-width="2.6" opacity="0.85"/></g></svg>
<div class="sti" style="top:694.0px;left:415.4px;">No Kit Selected</div>
<svg class="ic" style="left:524px;top:698.7px" width="13" height="13" viewBox="0 0 13 13" ><g fill="none" stroke="#ffffff" stroke-width="1.1" stroke-linejoin="round"><path d="M10.87 5.42 L12.63 5.58 L12.63 7.42 L10.87 7.58 L10.36 8.82 L11.49 10.18 L10.18 11.49 L8.82 10.36 L7.58 10.87 L7.42 12.63 L5.58 12.63 L5.42 10.87 L4.18 10.36 L2.82 11.49 L1.51 10.18 L2.64 8.82 L2.13 7.58 L0.37 7.42 L0.37 5.58 L2.13 5.42 L2.64 4.18 L1.51 2.82 L2.82 1.51 L4.18 2.64 L5.42 2.13 L5.58 0.37 L7.42 0.37 L7.58 2.13 L8.82 2.64 L10.18 1.51 L11.49 2.82 L10.36 4.18 Z"/><circle cx="6.5" cy="6.5" r="1.7"/></g></svg>
<div class="sti" style="top:694.0px;left:542px;">Build</div>
<div class="sti" style="top:694.0px;left:588.5px;">[all]</div>
<svg class="ic" style="left:628.7px;top:698.7px" width="13" height="13" viewBox="0 0 13 13" ><g fill="none" stroke="#ffffff" stroke-width="1.1"><ellipse cx="6.3" cy="7.5" rx="3.6" ry="4.4"/><path d="M3.5 4 C4 1.5 8.6 1.5 9.1 4"/><path d="M2.7 5.5 L0.5 4.5 M9.9 5.5 L12.1 4.5 M2.7 8 H0.3 M9.9 8 H12.3 M2.9 10.5 L0.8 12 M9.7 10.5 L11.8 12"/></g></svg>
<svg class="ic" style="left:660px;top:698.7px" width="11" height="13" viewBox="0 0 11 13" ><path d="M1 0.8 L10 6.5 L1 12.2 Z" fill="none" stroke="#ffffff" stroke-width="1.1" stroke-linejoin="round"/></svg>
<svg class="ic" style="left:691.5px;top:698.7px" width="12" height="13" viewBox="0 0 12 13" ><g fill="none" stroke="#ffffff" stroke-width="1.1" stroke-linejoin="round"><path d="M2.5 0.6 H9.5 M4 0.6 V5 L0.6 12.4 H11.4 L8 5 V0.6"/><path d="M2.3 8.8 H9.7"/></g></svg>
<div class="sti" style="top:694.0px;left:708px;">Run CTest</div>
<div class="sti" style="top:694.0px;left:816.4px;">Mac</div>
<svg class="ic" style="left:859px;top:698.2px" width="14" height="14" viewBox="0 0 14 14" ><g fill="none" stroke="#ffffff" stroke-width="1.1" stroke-linejoin="round"><circle cx="4.5" cy="5" r="2.4"/><path d="M0.5 13 C0.8 9.5 2.5 8.5 4.5 8.5 C6.5 8.5 8.2 9.5 8.5 13"/><path d="M7 1 H13 V6.5 H10.5 L9 8 V6.5"/></g></svg>
<svg class="ic" style="left:890.4px;top:698.2px" width="12" height="14" viewBox="0 0 12 14" ><g fill="none" stroke="#ffffff" stroke-width="1.1" stroke-linejoin="round"><path d="M6 1 C3.2 1 2.2 3.3 2.2 5.5 V8.6 L0.7 10.6 H11.3 L9.8 8.6 V5.5 C9.8 3.3 8.8 1 6 1 Z"/><path d="M4.4 12.2 A1.7 1.7 0 0 0 7.6 12.2"/></g></svg>

<div class="frame"></div>
</div></body></html>
